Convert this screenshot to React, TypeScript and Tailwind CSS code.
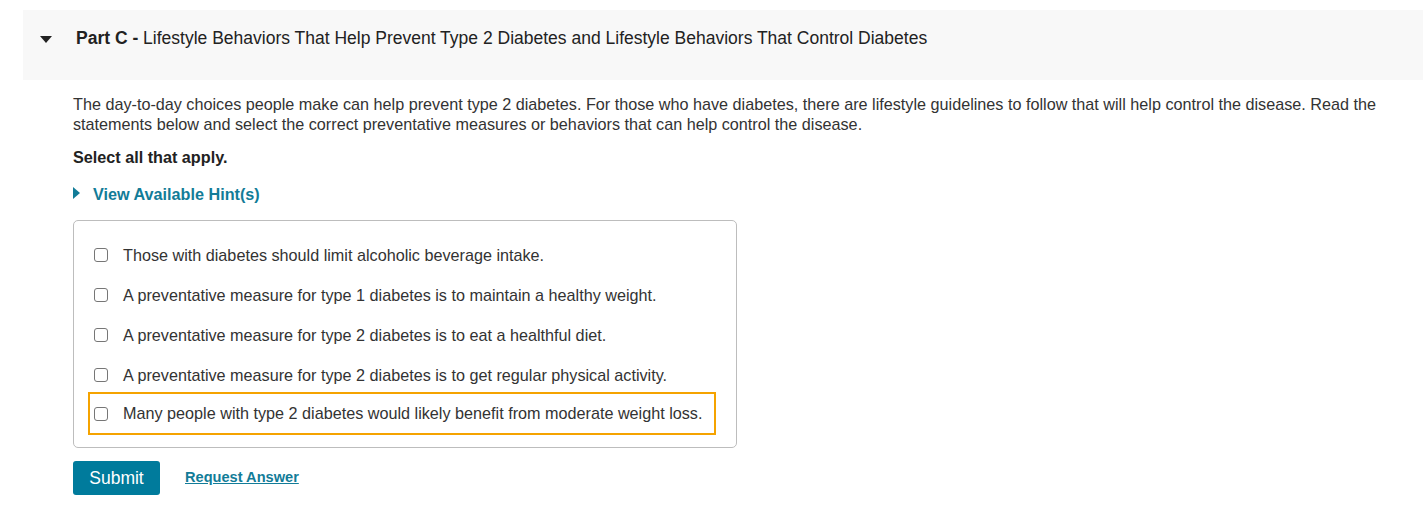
import React from 'react';

const options = [
  'Those with diabetes should limit alcoholic beverage intake.',
  'A preventative measure for type 1 diabetes is to maintain a healthy weight.',
  'A preventative measure for type 2 diabetes is to eat a healthful diet.',
  'A preventative measure for type 2 diabetes is to get regular physical activity.',
  'Many people with type 2 diabetes would likely benefit from moderate weight loss.',
];

function Checkbox() {
  return <span className="inline-block w-[14px] h-[14px] shrink-0 rounded-[3px] border border-[#767676] bg-white" />;
}

export default function App() {
  return (
    <div className="min-h-screen bg-white pt-[10px] pl-[23px] text-[#333] font-['Liberation_Sans',Arial,sans-serif]">
      {/* Part header */}
      <div className="h-[70px] bg-[#f8f8f8] flex items-start pt-[17px] pl-[17px]">
        <span className="mt-[9px] w-0 h-0 border-l-[6px] border-r-[6px] border-t-[7px] border-l-transparent border-r-transparent border-t-[#222]" />
        <h2 className="ml-[24px] text-[17.5px] leading-[22px] text-[#222]">
          <span className="font-bold">Part C - </span>
          Lifestyle Behaviors That Help Prevent Type 2 Diabetes and Lifestyle Behaviors That Control Diabetes
        </h2>
      </div>

      <div className="pl-[50px] pt-[14px] pr-[30px]">
        <p className="text-[16.2px] leading-[20px]">
          The day-to-day choices people make can help prevent type 2 diabetes. For those who have diabetes, there are lifestyle guidelines to follow that will help control the disease. Read the statements below and select the correct preventative measures or behaviors that can help control the disease.
        </p>
        <p className="mt-[13px] text-[16.2px] leading-[20px] font-bold text-[#222]">Select all that apply.</p>

        {/* Hint toggle */}
        <div className="mt-[17px] flex items-center gap-[13px] text-[#127c98]">
          <span className="-mt-[3px] w-0 h-0 border-t-[6px] border-b-[6px] border-l-[7px] border-t-transparent border-b-transparent border-l-[#127c98]" />
          <span className="text-[16.2px] leading-[20px] font-bold">View Available Hint(s)</span>
        </div>

        {/* Options */}
        <div className="mt-[16px] w-[664px] h-[228px] rounded-[5px] border border-[#bdbdbd] pl-[14px] pr-[20px] pt-[14px]">
          {options.map((o, i) => {
            const hl = i === options.length - 1;
            return (
              <label
                key={i}
                className={`flex items-center gap-[15px] pl-[4px] text-[16.2px] border-2 ${hl ? 'border-[#f5a300] h-[43px] -mt-[3px]' : 'border-transparent h-[40px]'}`}
              >
                <Checkbox />
                <span>{o}</span>
              </label>
            );
          })}
        </div>

        <div className="mt-[13px] flex items-center gap-[25px]">
          <button className="h-[34px] w-[87px] rounded-[3px] bg-[#007b9c] text-white text-[17.5px]">Submit</button>
          <a href="#" className="text-[14.6px] font-bold text-[#127c98] underline">Request Answer</a>
        </div>
      </div>
    </div>
  );
}
